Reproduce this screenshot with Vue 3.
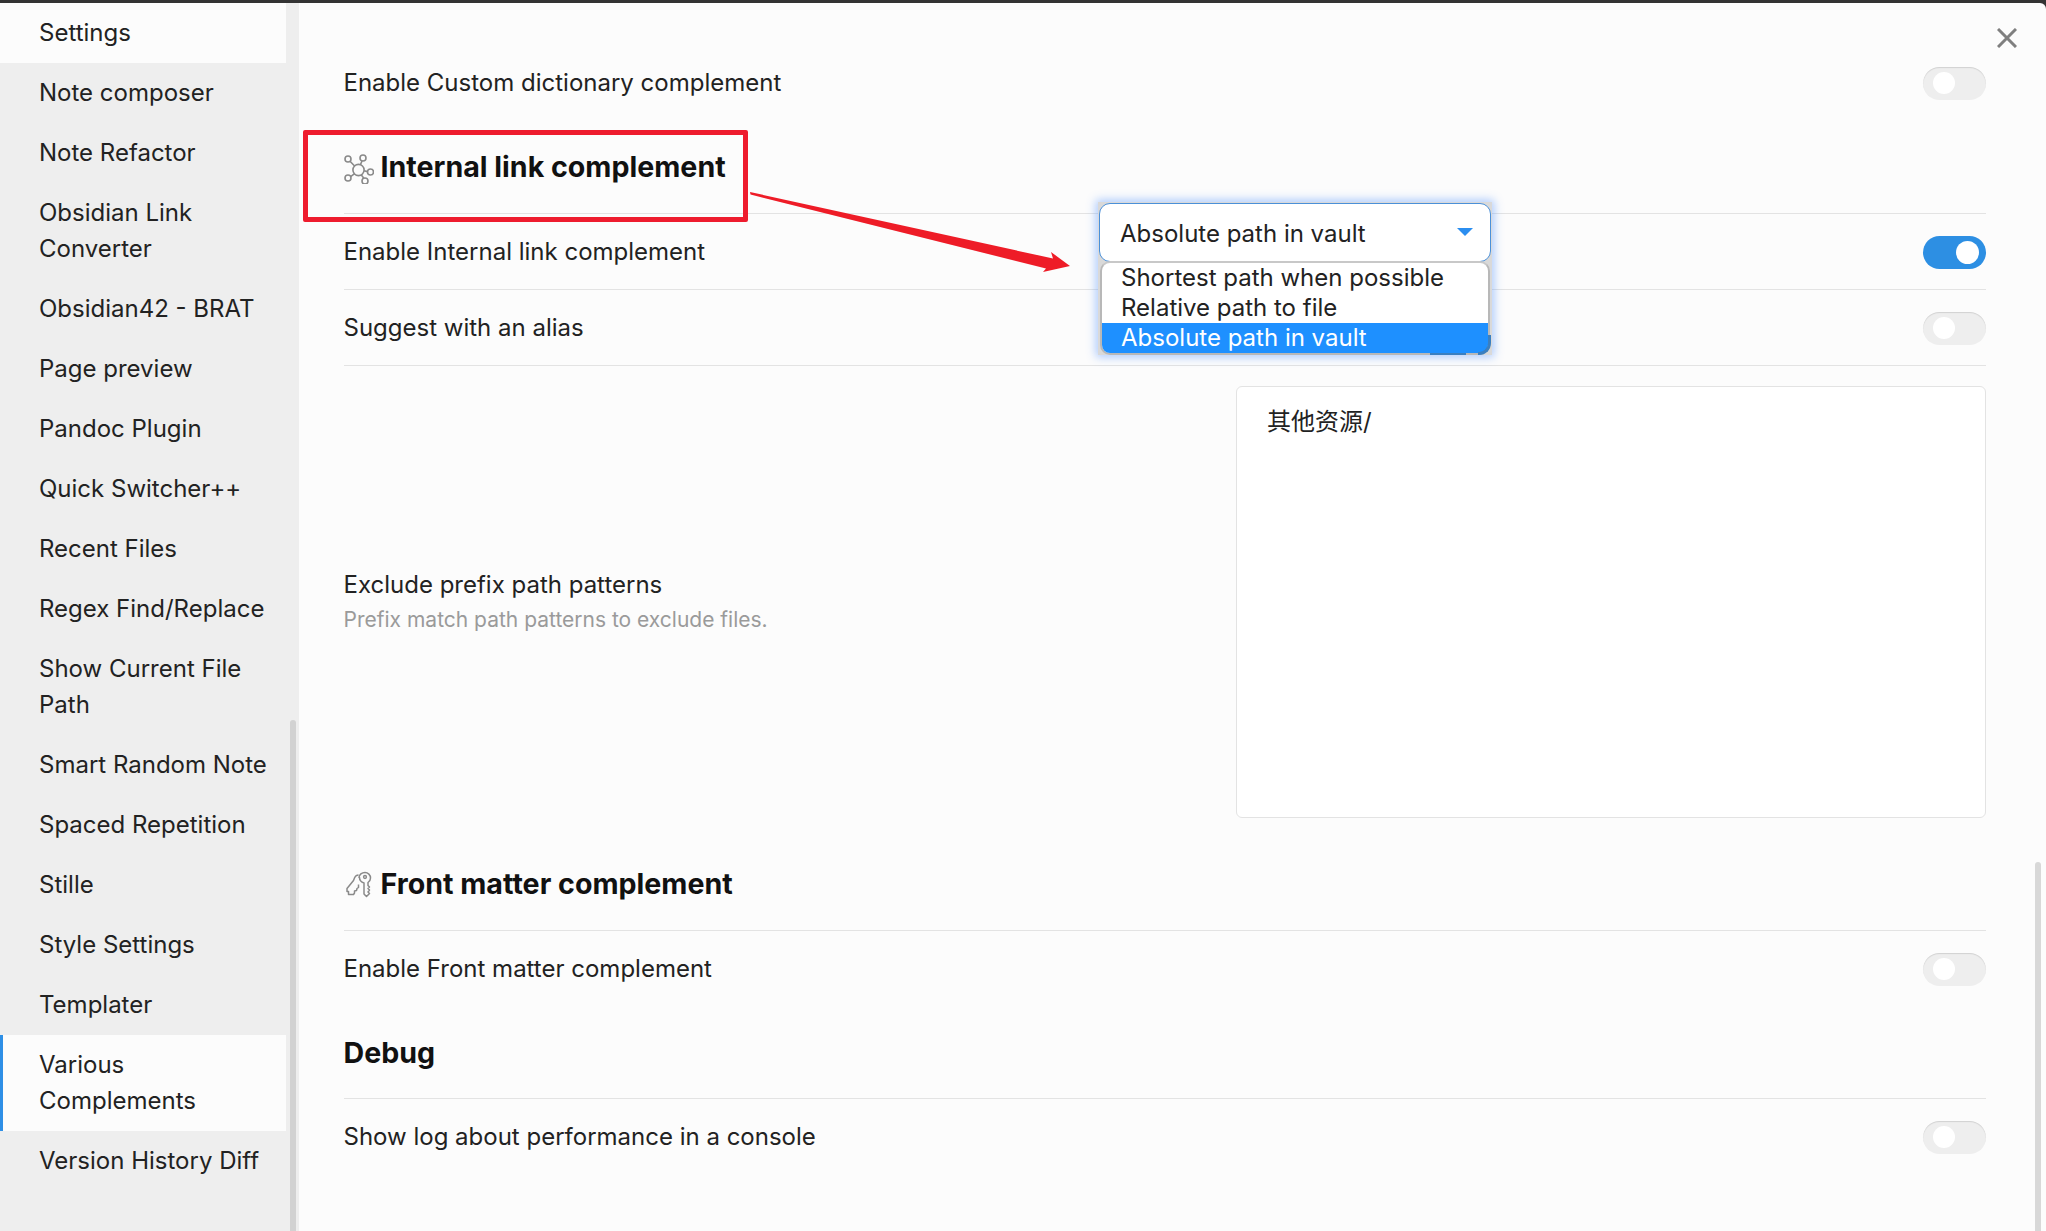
<script setup>
const plugins = [
  { name: 'Settings', selected: true },
  { name: 'Note composer' },
  { name: 'Note Refactor' },
  { name: 'Obsidian Link Converter' },
  { name: 'Obsidian42 - BRAT' },
  { name: 'Page preview' },
  { name: 'Pandoc Plugin' },
  { name: 'Quick Switcher++' },
  { name: 'Recent Files' },
  { name: 'Regex Find/Replace' },
  { name: 'Show Current File Path' },
  { name: 'Smart Random Note' },
  { name: 'Spaced Repetition' },
  { name: 'Stille' },
  { name: 'Style Settings' },
  { name: 'Templater' },
  { name: 'Various Complements', selected: true, accent: true },
  { name: 'Version History Diff' }
]
const options = ['Shortest path when possible', 'Relative path to file', 'Absolute path in vault']
</script>

<template>
  <div class="window">
    <div class="topbar"></div>
    <div class="modal">
      <aside class="sidebar">
        <div
          v-for="p in plugins"
          :key="p.name"
          class="nav-item"
          :class="{ selected: p.selected, accent: p.accent }"
        >{{ p.name }}</div>
        <div class="side-scroll"></div>
      </aside>

      <main class="content">
        <div class="row first">
          <div class="label">Enable Custom dictionary complement</div>
          <div class="toggle"></div>
        </div>

        <h3 class="heading">
          <svg class="icon" width="30" height="30" viewBox="0 0 30 30" fill="none" stroke="#8a8a8a" stroke-width="1.6">
            <circle cx="14.5" cy="16" r="5.6" />
            <circle cx="4" cy="5" r="3" />
            <circle cx="19" cy="4" r="3" />
            <circle cx="26.5" cy="18" r="3" />
            <circle cx="21" cy="27" r="3" />
            <circle cx="4" cy="24" r="3" />
            <path d="M6 7.2l4.6 4.8M18 7l-1.6 3.8M23.5 17.6l-3.4-.8M19.8 24.2l-2.6-3.4M6.6 22.6l4-3" />
          </svg>
          <span>Internal link complement</span>
        </h3>
        <div class="row">
          <div class="label">Enable Internal link complement</div>
          <div class="toggle on"></div>
        </div>
        <div class="row">
          <div class="label">Suggest with an alias</div>
          <div class="toggle"></div>
        </div>
        <div class="row tall">
          <div class="info">
            <div class="label">Exclude prefix path patterns</div>
            <div class="desc">Prefix match path patterns to exclude files.</div>
          </div>
          <div class="textarea">其他资源/</div>
        </div>

        <h3 class="heading">
          <svg class="icon" width="30" height="30" viewBox="0 0 30 30" fill="none" stroke="#8a8a8a" stroke-width="1.5" stroke-linejoin="round">
            <path d="M15 6.5c0-3 3-5 6-5s5.500 2.500 5.500 5.500c0 2-1 3.500-2.500 4.500v3l1.500 1.500-1.500 1.500 1.500 1.500-1.500 2 1.500 1.500-3 3-2.500-2.500V12c-2.500-.8-4.500-3-4.500-5.500z" />
            <circle cx="21" cy="6" r="1.400" />
            <path d="M14.500 4c-1.500 0-3 .8-3.800 2.500L9.500 9.500l-6.500 8v3h1.500v3h5l1-1.500v-2l2-.5.5-2 1.500-1v-3" />
          </svg>
          <span>Front matter complement</span>
        </h3>
        <div class="row">
          <div class="label">Enable Front matter complement</div>
          <div class="toggle"></div>
        </div>

        <h3 class="heading debug"><span>Debug</span></h3>
        <div class="row">
          <div class="label">Show log about performance in a console</div>
          <div class="toggle"></div>
        </div>

        <div class="main-scroll"></div>
      </main>
    </div>

    <svg class="close" width="20" height="20" viewBox="0 0 20 20" stroke="#7f7f7f" stroke-width="3" fill="none">
      <path d="M1 1l18 18M19 1L1 19" />
    </svg>

    <div class="callout"></div>
    <svg class="arrow" width="340" height="100" viewBox="0 0 340 100">
      <path fill="#ee1c27" d="M10 12L10.500 14.500L306 88.500L303 92L330 86L311 72L313 78.500z" />
    </svg>

    <div class="dropdown">
      <div class="select">
        <span>Absolute path in vault</span>
        <i class="caret"></i>
      </div>
      <div class="list">
        <div
          v-for="(o, i) in options"
          :key="o"
          class="option"
          :class="{ picked: i === options.length - 1 }"
        >{{ o }}</div>
      </div>
      <i class="peek-strip"></i>
      <i class="peek-corner"></i>
    </div>
  </div>
</template>

<style>
html, body { margin: 0; background: #fcfcfc; overflow: hidden; }
</style>

<style scoped>
.window {
  position: relative;
  width: 2046px;
  height: 1231px;
  overflow: hidden;
  display: flex;
  flex-direction: column;
  font-family: Inter, "Noto Sans CJK SC", sans-serif;
  font-size: 24px;
  color: #222;
  background: #333;
}
.topbar { height: 3px; flex: none; background: #333; }
.modal {
  flex: 1;
  display: flex;
  min-height: 0;
  background: #fcfcfc;
  border-top-right-radius: 6px;
}
.sidebar {
  position: relative;
  width: 299px;
  flex: none;
  box-sizing: border-box;
  padding-right: 13px;
  background: #eee;
}
.nav-item {
  padding: 12px 8px 12px 39px;
  line-height: 36px;
  box-sizing: border-box;
}
.nav-item.selected { background: #fcfcfc; }
.nav-item.accent { box-shadow: inset 3px 0 0 #2e8fe6; }
.side-scroll {
  position: absolute;
  left: 290px;
  top: 717px;
  bottom: 0;
  width: 6px;
  background: #d2d2d2;
  border-radius: 3px 3px 0 0;
}
.content {
  position: relative;
  flex: 1;
  box-sizing: border-box;
  padding: 41px 60px 0 44.5px;
}
.row {
  display: flex;
  align-items: center;
  justify-content: space-between;
  box-sizing: border-box;
  height: 76px;
  border-top: 1.500px solid #e3e3e3;
  padding-top: 1px;
}
.row.first { border-top: none; padding-top: 2px; }
.row.tall {
  height: 472px;
  align-items: center;
  padding: 20px 0 19px;
}
.label { line-height: 36px; }
.info { margin-bottom: 4px; }
.desc {
  font-size: 21px;
  line-height: 28px;
  color: #9a9a9a;
  margin-top: 3px;
}
.textarea {
  box-sizing: border-box;
  width: 750px;
  height: 432px;
  padding: 17px 30px;
  line-height: 36px;
  background: #fff;
  border: 1.500px solid #e3e3e3;
  border-radius: 6px;
}
.heading {
  display: flex;
  align-items: center;
  gap: 7px;
  box-sizing: border-box;
  height: 93px;
  margin: 0;
  font-size: 28.6px;
  font-weight: 700;
  color: #111;
}
.heading.debug { height: 92px; }
.icon { flex: none; margin-top: 4px; }
.toggle {
  position: relative;
  flex: none;
  width: 63px;
  height: 33px;
  border-radius: 17px;
  background: #eee;
  box-shadow: inset 0 1px 1px rgba(0, 0, 0, .12);
}
.toggle::after {
  content: '';
  position: absolute;
  left: 10px;
  top: 5px;
  width: 22px;
  height: 22px;
  border-radius: 50%;
  background: #fff;
}
.toggle.on { background: #2d8fe3; box-shadow: none; }
.toggle.on::after { left: 33px; width: 23px; height: 23px; top: 5px; }
.main-scroll {
  position: absolute;
  right: 5px;
  top: 859px;
  bottom: 0;
  width: 6px;
  background: #d8d8d8;
  border-radius: 3px 3px 0 0;
}
.close { position: absolute; left: 1997px; top: 28px; }
.callout {
  position: absolute;
  left: 303px;
  top: 130px;
  width: 445px;
  height: 92px;
  box-sizing: border-box;
  border: 5px solid #ee1c2e;
  border-radius: 2px;
}
.arrow { position: absolute; left: 740px; top: 180px; }
.dropdown {
  position: absolute;
  left: 1098px;
  top: 202px;
  width: 394px;
  height: 153px;
  background: #d9d9d9;
  box-shadow: 0 0 9px 2px rgba(70, 140, 255, .45);
}
.select {
  display: flex;
  align-items: center;
  justify-content: space-between;
  box-sizing: border-box;
  position: absolute;
  left: 1px;
  right: 1px;
  top: 1px;
  height: 59px;
  padding: 2px 17px 0 20px;
  background: #fff;
  border: 1.500px solid #4a90d9;
  border-radius: 11px;
}
.caret {
  width: 0;
  height: 0;
  border-left: 8px solid transparent;
  border-right: 8px solid transparent;
  border-top: 8px solid #2b8ef0;
  margin-top: -3px;
}
.list {
  position: absolute;
  left: 2px;
  right: 2px;
  top: 59px;
  height: 94px;
  box-sizing: border-box;
  background: #fff;
  border: 2px solid #b8b8b8;
  border-top-color: #c8c8c8;
  border-radius: 10px;
  overflow: hidden;
}
.option {
  height: 30px;
  line-height: 30px;
  padding-left: 19px;
  color: #222;
}
.option.picked { background: #1e90ff; color: #fff; }
.peek-strip {
  position: absolute;
  left: 332px;
  bottom: 0;
  width: 36px;
  height: 2px;
  background: #3a7fc0;
}
.peek-corner {
  position: absolute;
  right: 1px;
  bottom: 0;
  width: 10px;
  height: 17px;
  border-right: 3px solid #3a7fc0;
  border-bottom: 3px solid #3a7fc0;
  border-bottom-right-radius: 12px;
}
</style>
